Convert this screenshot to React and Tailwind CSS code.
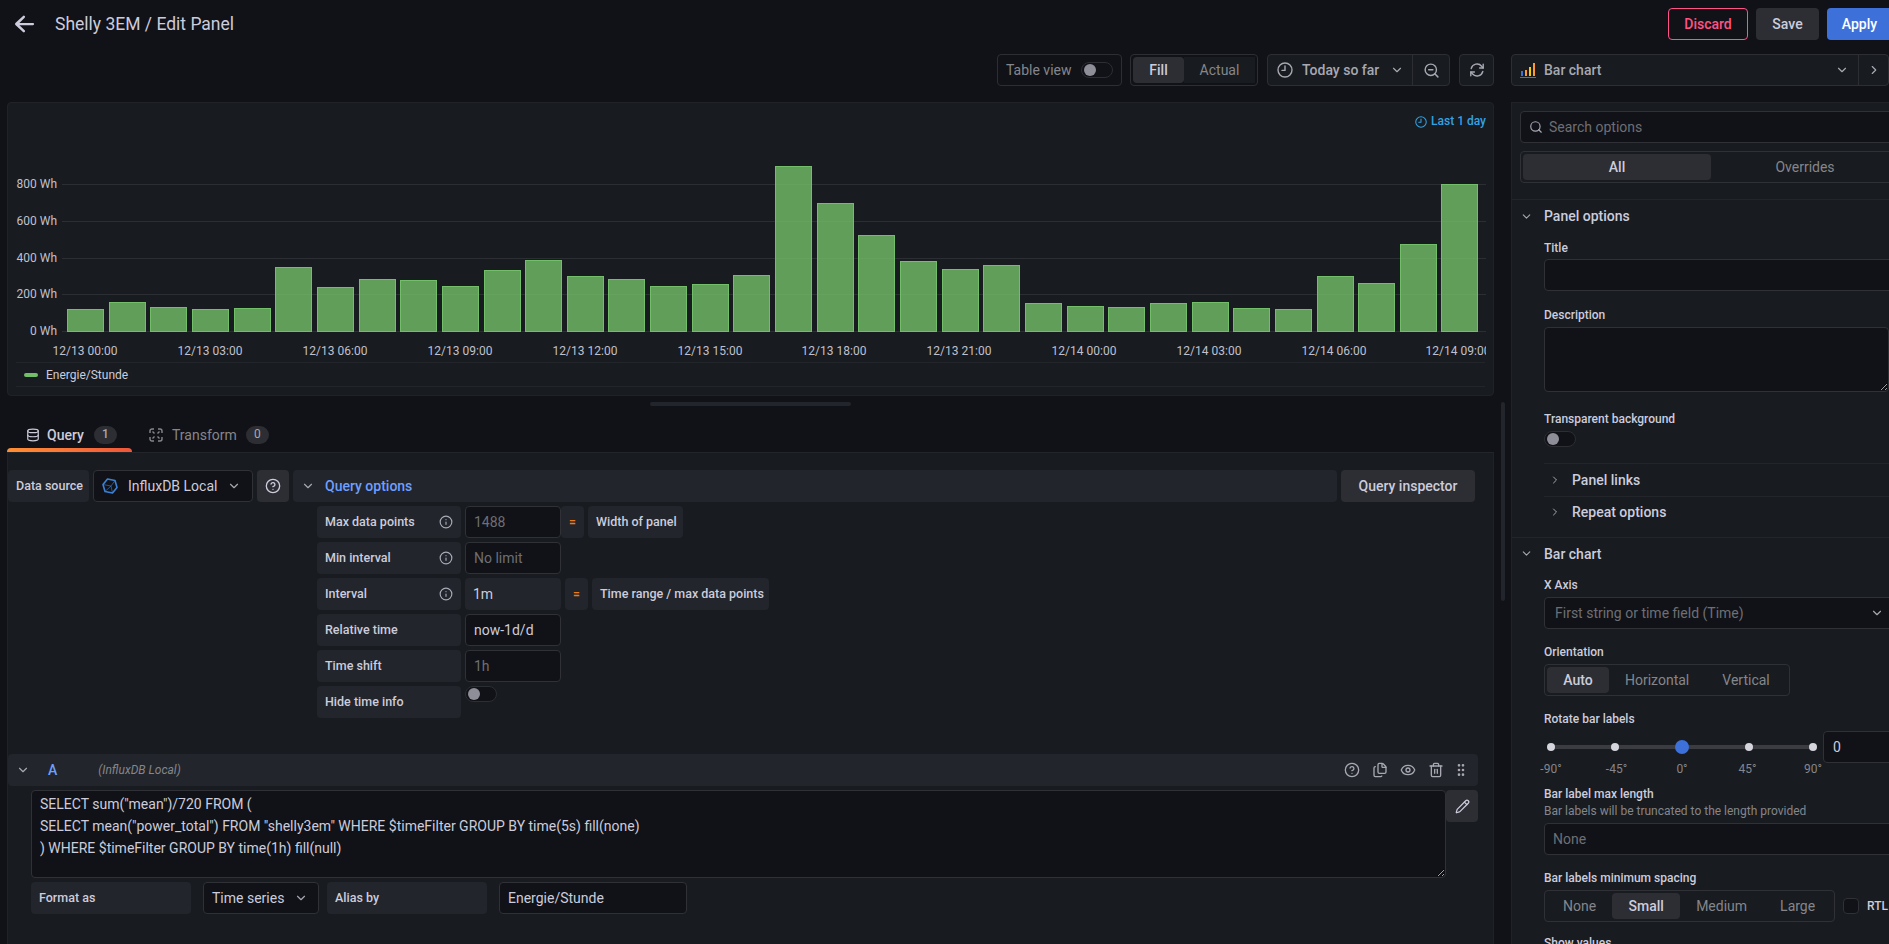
import { ChevronDown, ChevronRight, CircleHelp, Database, Eye, Files, GripVertical, Info, Pencil, Search, Trash2, ZoomOut } from 'lucide-react';

// bar tops as page y, one per hour from 12/13 00:00 to 12/14 09:00
const barTops = [309, 302, 307, 309, 308, 267, 287, 279, 280, 286, 270, 260, 276, 279, 286, 284, 275, 166, 203, 235, 261, 269, 265, 303, 306, 307, 303, 302, 308, 309, 276, 283, 244, 184];
const gridLines = [
  { y: 184, label: '800 Wh' },
  { y: 221, label: '600 Wh' },
  { y: 258, label: '400 Wh' },
  { y: 294, label: '200 Wh' },
  { y: 331, label: '0 Wh' },
];
const timeLabels = [
  [85, '12/13 00:00'], [210, '12/13 03:00'], [335, '12/13 06:00'], [460, '12/13 09:00'],
  [585, '12/13 12:00'], [710, '12/13 15:00'], [834, '12/13 18:00'], [959, '12/13 21:00'],
  [1084, '12/14 00:00'], [1209, '12/14 03:00'], [1334, '12/14 06:00'], [1458, '12/14 09:00'],
];

function Chart() {
  return (
    <svg width="1485" height="232" viewBox="8 130 1485 232" className="block">
      <defs>
        <clipPath id="plot"><rect x="8" y="130" width="1478" height="232" /></clipPath>
      </defs>
      {gridLines.map(g => (
        <g key={g.y}>
          <line x1="62" x2="1486" y1={g.y + 0.5} y2={g.y + 0.5} stroke="#2b2e33" />
          <text x="57" y={g.y + 3.5} textAnchor="end" fontSize="12" fill="#c0c0ce">{g.label}</text>
        </g>
      ))}
      {barTops.map((top, i) => (
        <rect key={i} x={Math.round(67 + 41.65 * i) + 0.5} y={top + 0.5} width="36" height={331 - top} fill="#73bf69" fillOpacity="0.8" stroke="#73bf69" />
      ))}
      <g clipPath="url(#plot)">
        {timeLabels.map(([x, label]) => (
          <text key={label} x={x} y="355" textAnchor="middle" fontSize="12" fill="#c0c0ce">{label}</text>
        ))}
      </g>
    </svg>
  );
}

function ClockIcon({ size = 16, className = '' }) {
  return (
    <svg width={size} height={size} viewBox="0 0 16 16" fill="none" stroke="currentColor" strokeWidth="1.4" strokeLinecap="round" strokeLinejoin="round" className={className}>
      <circle cx="8" cy="8" r="7" />
      <path d="M8 4v4.4H5" />
    </svg>
  );
}

function SyncIcon() {
  return (
    <svg width="16" height="16" viewBox="0 0 16 16" fill="none" stroke="currentColor" strokeWidth="1.4" strokeLinecap="round" strokeLinejoin="round">
      <path d="M2.2 6.5A6 6 0 0 1 12.6 4.2L14.2 6" />
      <path d="M14.2 2.2V6h-3.6" />
      <path d="M13.8 9.5A6 6 0 0 1 3.4 11.8L1.8 10" />
      <path d="M1.8 13.8V10h3.6" />
    </svg>
  );
}

function TransformIcon() {
  return (
    <svg width="14" height="14" viewBox="0 0 14 14" fill="none" stroke="currentColor" strokeWidth="1.4">
      <path d="M1 5V3a2 2 0 0 1 2-2h2M9 1h2a2 2 0 0 1 2 2v2M13 9v2a2 2 0 0 1-2 2H9M5 13H3a2 2 0 0 1-2-2V9" />
      <path d="M3.5 3.5l2 2M10.5 3.5l-2 2M10.5 10.5l-2-2M3.5 10.5l2-2" />
    </svg>
  );
}

function InfluxIcon() {
  return (
    <svg width="16" height="16" viewBox="0 0 16 16" fill="none" stroke="#3b82d6" strokeWidth="1.2" strokeLinejoin="round" className="shrink-0">
      <path d="M5.5 1L13 2.5 15 9.5 10.5 15 3 13.5 1 6.5z" strokeWidth="1.6" />
      <path d="M1 6.5L9 8 13 2.5M9 8l1.5 7M9 8L3 13.5" strokeWidth="0.6" />
    </svg>
  );
}

function BarChartIcon() {
  return (
    <svg width="16" height="16" viewBox="0 0 16 16" className="shrink-0">
      <rect x="1" y="9" width="2" height="5" fill="#3d71d9" />
      <rect x="5" y="8" width="2" height="6" fill="#ff9830" />
      <rect x="9" y="5" width="2" height="9" fill="#f2cc0c" />
      <rect x="13" y="1" width="2" height="13" fill="#ff9830" />
      <rect x="0" y="15" width="16" height="1" fill="#3d71d9" />
    </svg>
  );
}

function Toggle() {
  return (
    <div className="flex h-4 w-8 items-center rounded-full border border-[#2c2e33] bg-[#111217] px-[2px]">
      <div className="h-3 w-3 rounded-full bg-[#8e8e99]" />
    </div>
  );
}

function FormLabel({ children, width, icon }) {
  return (
    <div style={{ width }} className="flex h-8 shrink-0 items-center justify-between rounded-sm bg-[#22252b] px-2 text-[12.5px] font-medium whitespace-nowrap text-[#ccccdc]">
      {children}
      {icon && <Info size={14} className="text-[#ccccdc] opacity-80" />}
    </div>
  );
}

function Field({ children, placeholder, className = 'w-24' }) {
  return (
    <div className={`flex h-8 shrink-0 items-center rounded-sm border border-[#2f3136] bg-[#111217] px-2 text-sm ${placeholder ? 'text-[#6d6f75]' : 'text-[#ccccdc]'} ${className}`}>
      {children}
    </div>
  );
}

function Equals() {
  return <span className="text-[12px] font-bold text-[#eb7b18]">=</span>;
}

function OptionLabel({ children, className = '' }) {
  return <div className={`h-4 text-[12px] leading-4 font-medium text-[#ccccdc] ${className}`}>{children}</div>;
}

function SideInput({ children, className = '' }) {
  return (
    <div className={`flex h-8 w-[360px] items-center rounded-sm border border-[#2f3136] bg-[#111217] px-2 text-sm text-[#6d6f75] ${className}`}>
      {children}
    </div>
  );
}

const sliderMarks = ['-90°', '-45°', '0°', '45°', '90°'];

export default function App() {
  return (
    <div className="flex h-[944px] w-[1889px] flex-col overflow-hidden bg-[#111217] text-[#ccccdc] [font-family:Roboto,sans-serif]">
      {/* top bar */}
      <div className="flex h-[48px] shrink-0 items-center pr-0 pl-[12px]">
        <svg width="24" height="24" viewBox="0 0 24 24" fill="#ccccdc" className="shrink-0">
          <path d="M21 11H7.4l5.3-5.3a1.2 1.2 0 0 0-1.7-1.7l-7.6 7.1a1.3 1.3 0 0 0 0 1.8l7.6 7.1a1.2 1.2 0 0 0 1.7-1.7L7.4 13.2H21a1.1 1.1 0 0 0 0-2.2z" />
        </svg>
        <h1 className="ml-[19px] text-[17.5px] text-[#ccccdc]">Shelly 3EM / Edit Panel</h1>
        <div className="ml-auto flex translate-x-[3px] gap-2">
          <button className="h-8 w-20 rounded-sm border border-[#ff5286] text-sm font-medium text-[#ff5286]">Discard</button>
          <button className="h-8 w-[63px] rounded-sm bg-[#2d2e34] text-sm font-medium text-[#ccccdc]">Save</button>
          <button className="h-8 w-[65px] rounded-sm bg-[#3d71d9] text-sm font-medium text-white">Apply</button>
        </div>
      </div>

      {/* panel toolbar */}
      <div className="mt-[6px] flex h-8 shrink-0 justify-end text-sm">
        <div className="flex w-[125px] items-center justify-between rounded-sm border border-[#2c2e33] pr-2 pl-2 text-[#85868c]">
          Table view
          <Toggle />
        </div>
        <div className="ml-2 flex w-[128px] items-center rounded-sm border border-[#2c2e33] p-[2px]">
          <div className="flex h-[26px] w-[51px] items-center justify-center rounded-sm bg-[#2c2e33] font-medium text-[#ccccdc]">Fill</div>
          <div className="flex h-[26px] flex-1 items-center justify-center bg-[#181b1f] text-[#85868c]">Actual</div>
        </div>
        <div className="ml-[9px] flex w-[183px] items-center rounded-sm border border-[#2c2e33] bg-[#181b1f] font-medium text-[#a7a8b2]">
          <ClockIcon className="ml-[9px]" />
          <span className="ml-[9px]">Today so far</span>
          <ChevronDown size={14} className="ml-[11px]" />
          <div className="ml-[8px] flex h-full flex-1 items-center justify-center border-l border-[#2c2e33]">
            <ZoomOut size={17} />
          </div>
        </div>
        <div className="ml-[9px] flex w-[35px] items-center justify-center rounded-sm border border-[#2c2e33] bg-[#181b1f] text-[#a7a8b2]">
          <SyncIcon />
        </div>
        <div className="ml-[17px] flex w-[378px] items-center rounded-sm border border-[#2c2e33] bg-[#181b1f] font-medium text-[#a7a8b2]">
          <div className="ml-2"><BarChartIcon /></div>
          <span className="ml-2">Bar chart</span>
          <ChevronDown size={14} className="ml-auto mr-[9px]" />
          <div className="flex h-full w-[30px] items-center justify-center border-l border-[#2c2e33]">
            <ChevronRight size={14} />
          </div>
        </div>
      </div>

      <div className="mt-4 flex min-h-0 flex-1">
        {/* left column */}
        <div className="flex w-[1494px] shrink-0 flex-col pl-[7px]">
          <div className="h-[294px] shrink-0 rounded-sm border border-[#202226] bg-[#181b1f]">
            <div className="flex h-[27px] items-end justify-end gap-1 pr-[7px] text-[12px] font-medium text-[#33a2e5]">
              <ClockIcon size={12} className="mb-[2px]" />
              Last 1 day
            </div>
            <Chart />
            <div className="mx-2 flex h-[25px] items-center border-y border-[#22252a] pl-2 text-[12px] text-[#ccccdc]">
              <div className="h-1 w-[14px] rounded-sm bg-[#73bf69]" />
              <span className="ml-2">Energie/Stunde</span>
            </div>
          </div>

          <div className="mx-auto mt-[6px] h-1 w-[201px] shrink-0 rounded-sm bg-[#22252b]" />

          {/* tabs */}
          <div className="flex h-[47px] shrink-0 items-end gap-[17px] border-b border-[#22252a] text-sm">
            <div className="flex w-[125px] flex-col">
              <div className="flex h-[18px] items-center pl-[19px] font-medium text-[#ccccdc]">
                <Database size={14} />
                <span className="ml-[7px]">Query</span>
                <span className="ml-[10px] flex h-[18px] w-[23px] items-center justify-center rounded-full bg-[#2c2e33] text-[12px] text-[#a7a8b2]">1</span>
              </div>
              <div className="mt-1 h-1 rounded-t-sm bg-gradient-to-r from-[#ff8f33] to-[#f0553a]" />
            </div>
            <div className="mb-[8px] flex h-[18px] items-center text-[#85868c]">
              <TransformIcon />
              <span className="ml-[9px]">Transform</span>
              <span className="ml-[9px] flex h-[18px] w-[23px] items-center justify-center rounded-full bg-[#2c2e33] text-[12px] text-[#a7a8b2]">0</span>
            </div>
          </div>

          {/* query editor */}
          <div className="flex-1 border-x border-[#202226] bg-[#181b1f] pt-[17px]">
            <div className="flex h-8 gap-1">
              <FormLabel width={81}>Data source</FormLabel>
              <div className="flex h-8 w-40 items-center rounded-sm border border-[#2f3136] bg-[#111217] pl-2 text-sm text-[#ccccdc]">
                <InfluxIcon />
                <span className="ml-[10px]">InfluxDB Local</span>
                <ChevronDown size={14} className="ml-[10px] text-[#a7a8b2]" />
              </div>
              <div className="flex h-8 w-8 items-center justify-center rounded-sm bg-[#2d2e34] text-[#ccccdc]">
                <CircleHelp size={16} />
              </div>
              <div className="flex h-8 w-[1044px] items-center rounded-sm bg-[#22252b] pl-2 text-sm font-medium text-[#6e9fff]">
                <ChevronDown size={14} className="text-[#a7a8b2]" />
                <span className="ml-[10px]">Query options</span>
              </div>
              <button className="h-8 w-[134px] rounded-sm bg-[#2d2e34] text-sm font-medium text-[#ccccdc]">Query inspector</button>
            </div>

            <div className="mt-1 ml-[309px] flex flex-col gap-1">
              <div className="flex gap-1">
                <FormLabel width={144} icon>Max data points</FormLabel>
                <Field placeholder>1488</Field>
                <div className="-ml-1 flex h-8 w-[23px] items-center justify-center rounded-sm bg-[#22252b]"><Equals /></div>
                <FormLabel width={95}>Width of panel</FormLabel>
              </div>
              <div className="flex gap-1">
                <FormLabel width={144} icon>Min interval</FormLabel>
                <Field placeholder>No limit</Field>
              </div>
              <div className="flex gap-1">
                <FormLabel width={144} icon>Interval</FormLabel>
                <div className="flex h-8 w-24 items-center rounded-sm bg-[#22252b] px-2 text-sm">1m</div>
                <div className="flex h-8 w-[23px] items-center justify-center rounded-sm bg-[#22252b]"><Equals /></div>
                <FormLabel width={177}>Time range / max data points</FormLabel>
              </div>
              <div className="flex gap-1">
                <FormLabel width={144}>Relative time</FormLabel>
                <Field>now-1d/d</Field>
              </div>
              <div className="flex gap-1">
                <FormLabel width={144}>Time shift</FormLabel>
                <Field placeholder>1h</Field>
              </div>
              <div className="flex gap-1">
                <FormLabel width={144}>Hide time info</FormLabel>
                <Toggle />
              </div>
            </div>

            {/* query row */}
            <div className="mt-9 flex h-8 w-[1470px] items-center rounded-sm bg-[#22252b] pl-2">
              <ChevronDown size={14} className="text-[#a7a8b2]" />
              <span className="ml-[18px] text-sm font-medium text-[#6e9fff]">A</span>
              <span className="ml-[41px] text-[12px] text-[#85868c] italic">(InfluxDB Local)</span>
              <div className="ml-auto flex items-center gap-3 pr-[9px] text-[#a7a8b2]">
                <CircleHelp size={16} />
                <Files size={16} />
                <Eye size={16} />
                <Trash2 size={16} />
                <GripVertical size={16} className="-ml-[3px]" />
              </div>
            </div>
            <div className="mt-1 ml-[23px] flex items-start">
              <textarea
                readOnly
                className="h-[88px] w-[1415px] resize-y rounded-sm border border-[#2f3136] bg-[#111217] px-2 py-[2px] text-sm leading-[22px] text-[#ccccdc] outline-none"
                value={'SELECT sum("mean")/720 FROM (\nSELECT mean("power_total") FROM "shelly3em" WHERE $timeFilter GROUP BY time(5s) fill(none)\n) WHERE $timeFilter GROUP BY time(1h) fill(null)'}
              />
              <div className="flex h-8 w-8 items-center justify-center rounded-sm bg-[#2d2e34] text-[#ccccdc]">
                <Pencil size={15} />
              </div>
            </div>
            <div className="mt-1 ml-[23px] flex">
              <FormLabel width={160}>Format as</FormLabel>
              <div className="ml-3 flex h-8 w-[116px] items-center rounded-sm border border-[#2f3136] bg-[#111217] pl-2 text-sm">
                Time series
                <ChevronDown size={14} className="ml-[10px] text-[#a7a8b2]" />
              </div>
              <div className="ml-2"><FormLabel width={160}>Alias by</FormLabel></div>
              <div className="ml-3"><Field className="w-[188px]">Energie/Stunde</Field></div>
            </div>
          </div>
        </div>

        {/* scroll thumb */}
        <div className="mt-[300px] ml-[7px] h-[199px] w-1 shrink-0 rounded-sm bg-[#22252b]" />

        {/* options pane */}
        <div className="ml-[6px] w-[420px] shrink-0 border-x border-t border-[#202226] bg-[#181b1f]">
          <div className="mt-[8px] ml-2 flex h-8 w-[400px] items-center gap-[6px] rounded-sm border border-[#2f3136] bg-[#111217] pl-2 text-sm text-[#6d6f75]">
            <Search size={14} className="text-[#a7a8b2]" />
            Search options
          </div>
          <div className="mt-2 ml-2 flex h-8 w-[400px] items-center rounded-sm border border-[#2f3136] p-[2px] text-sm">
            <div className="flex h-[26px] w-[188px] items-center justify-center rounded-sm bg-[#2c2e33] font-medium text-[#ccccdc]">All</div>
            <div className="flex h-[26px] w-[188px] items-center justify-center text-[#85868c]">Overrides</div>
          </div>
          <div className="mt-4 border-t border-[#22252a]" />

          <div className="flex h-8 items-center pl-2 text-sm font-medium">
            <ChevronDown size={13} className="text-[#a7a8b2]" />
            <span className="ml-[11px]">Panel options</span>
          </div>
          <div className="pl-[32px]">
            <OptionLabel className="mt-2">Title</OptionLabel>
            <SideInput className="mt-[3px]" />
            <OptionLabel className="mt-4">Description</OptionLabel>
            <textarea readOnly className="mt-1 block h-[65px] w-[345px] resize-y rounded-sm border border-[#2f3136] bg-[#111217] outline-none" />
            <OptionLabel className="mt-[19px]">Transparent background</OptionLabel>
            <div className="mt-1"><Toggle /></div>
            <div className="mt-4 flex h-[33px] items-center border-t border-[#22252a] pb-px pl-[5px] text-sm font-medium">
              <ChevronRight size={12} className="text-[#a7a8b2]" />
              <span className="ml-[11px]">Panel links</span>
            </div>
            <div className="flex h-[33px] items-center border-t border-[#22252a] pb-[2px] pl-[5px] text-sm font-medium">
              <ChevronRight size={12} className="text-[#a7a8b2]" />
              <span className="ml-[11px]">Repeat options</span>
            </div>
          </div>
          <div className="mt-[8px] border-t border-[#22252a]" />

          <div className="flex h-[31px] items-center pl-2 text-sm font-medium">
            <ChevronDown size={13} className="text-[#a7a8b2]" />
            <span className="ml-[11px]">Bar chart</span>
          </div>
          <div className="pl-[32px]">
            <OptionLabel className="mt-2">X Axis</OptionLabel>
            <SideInput className="mt-1 pl-[10px]">
              First string or time field (Time)
              <ChevronDown size={14} className="mr-[11px] ml-auto text-[#a7a8b2]" />
            </SideInput>

            <OptionLabel className="mt-[15px]">Orientation</OptionLabel>
            <div className="mt-1 flex h-8 w-[246px] items-center rounded-sm border border-[#2f3136] p-[2px] text-sm text-[#85868c]">
              <div className="flex h-[26px] w-[62px] items-center justify-center rounded-sm bg-[#2c2e33] font-medium text-[#ccccdc]">Auto</div>
              <div className="ml-[16px]">Horizontal</div>
              <div className="ml-[33px]">Vertical</div>
            </div>

            <OptionLabel className="mt-[15px]">Rotate bar labels</OptionLabel>
            <div className="mt-1 flex items-start">
              <div className="ml-[3px] w-[270px]">
                <div className="relative flex h-8 items-center justify-between">
                  <div className="absolute inset-x-1 h-1 bg-[#3a3c42]" />
                  {sliderMarks.map((m, i) => (
                    <div key={m} className={i === 2 ? 'relative h-[14px] w-[14px] rounded-full bg-[#3d71d9]' : 'relative h-2 w-2 rounded-full bg-[#d5d5dd]'} />
                  ))}
                </div>
                <div className="-mx-2 -mt-[2px] flex h-4 justify-between text-[12px] leading-4 text-[#85868c]">
                  {sliderMarks.map(m => <span key={m} className="w-6 text-center">{m}</span>)}
                </div>
              </div>
              <div className="ml-[6px] flex h-8 w-[80px] items-center rounded-sm border border-[#2f3136] bg-[#111217] pl-[9px] text-sm">0</div>
            </div>

            <OptionLabel className="mt-[9px]">Bar label max length</OptionLabel>
            <div className="mt-px h-4 text-[12px] leading-4 text-[#85868c]">Bar labels will be truncated to the length provided</div>
            <SideInput className="mt-1">None</SideInput>

            <OptionLabel className="mt-[15px]">Bar labels minimum spacing</OptionLabel>
            <div className="mt-1 flex items-center">
              <div className="flex h-8 w-[291px] items-center rounded-sm border border-[#2f3136] p-[2px] text-sm text-[#85868c]">
                <div className="ml-[16px]">None</div>
                <div className="ml-[16px] flex h-[26px] w-[68px] items-center justify-center rounded-sm bg-[#2c2e33] font-medium text-[#ccccdc]">Small</div>
                <div className="ml-[16px]">Medium</div>
                <div className="ml-[33px]">Large</div>
              </div>
              <div className="ml-[8px] h-4 w-4 rounded-sm border border-[#2f3136] bg-[#111217]" />
              <span className="ml-2 text-[12px] font-medium">RTL</span>
            </div>
            <OptionLabel className="mt-[13px]">Show values</OptionLabel>
          </div>
        </div>
      </div>
    </div>
  );
}
